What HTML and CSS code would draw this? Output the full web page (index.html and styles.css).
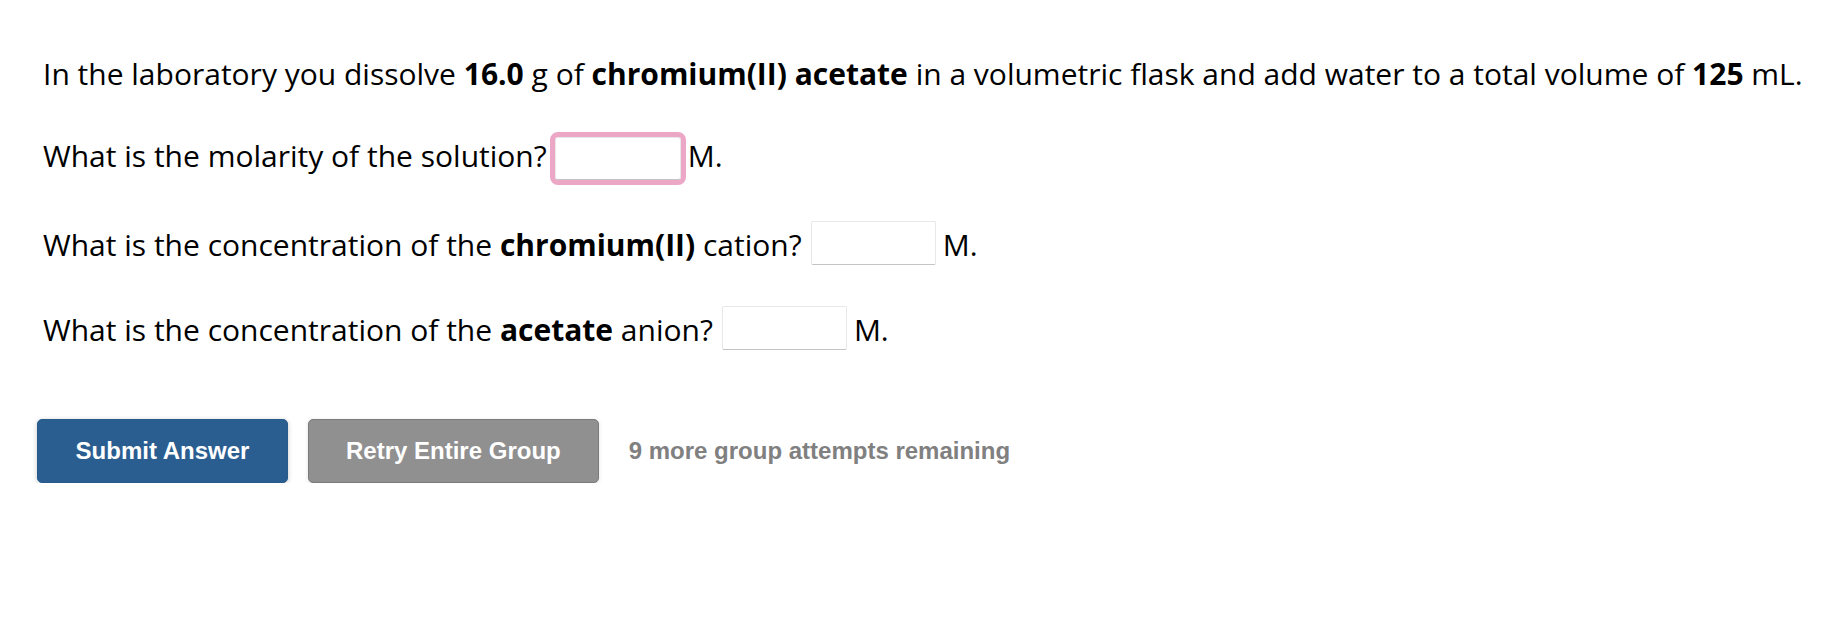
FILE: index.html
```html
<!DOCTYPE html>
<html lang="en">
<head>
<meta charset="utf-8">
<title>Chromium(II) acetate molarity</title>
<link rel="stylesheet" href="styles.css">
</head>
<body>
<div class="question">
  <p class="intro">In the laboratory you dissolve <b>16.0</b> g of <b>chromium(II) acetate</b> in a volumetric flask and add water to a total volume of <b>125</b> mL.</p>
  <p class="q q-first">What is the molarity of the solution?<input class="answer answer-focus" type="text" aria-label="molarity">M.</p>
  <p class="q q-mid">What is the concentration of the <b>chromium(II)</b> cation?<input class="answer answer-plain" type="text" aria-label="cation concentration">M.</p>
  <p class="q q-last">What is the concentration of the <b>acetate</b> anion?<input class="answer answer-plain" type="text" aria-label="anion concentration">M.</p>
  <div class="actions">
    <button class="btn btn-submit" type="button">Submit Answer</button>
    <button class="btn btn-retry" type="button">Retry Entire Group</button>
    <span class="attempts">9 more group attempts remaining</span>
  </div>
</div>
</body>
</html>
```

FILE: styles.css
```css
html, body {
  margin: 0;
  padding: 0;
  background: #ffffff;
}

.question {
  padding: 53px 0 0 43px;
  font-family: "Open Sans", "Liberation Sans", sans-serif;
  font-size: 30px;
  color: #000000;
}

.question p {
  margin: 0;
  line-height: 42px;
  white-space: nowrap;
}

.question b {
  font-weight: 700;
}

.question .q-first {
  margin-top: 40px;
}

.question .q-mid {
  margin-top: 41px;
}

.question .q-last {
  margin-top: 40px;
}

.answer {
  box-sizing: border-box;
  width: 125px;
  height: 44px;
  padding: 0 6px;
  border: 1px solid #e8e8e8;
  border-bottom-color: #c4c4c4;
  border-radius: 2px;
  background: #ffffff;
  font-family: "Open Sans", sans-serif;
  font-size: 24px;
}

.answer-focus {
  width: 126px;
  height: 43px;
  margin: 0 7px 0 8px;
  vertical-align: middle;
  outline: 5px solid #eca6c6;
  border-radius: 3px;
}

.answer-plain {
  margin: 0 7px 0 9px;
  vertical-align: text-bottom;
}

.actions {
  display: flex;
  align-items: center;
  gap: 20px;
  margin-top: 68px;
  margin-left: -6px;
}

.btn {
  box-sizing: border-box;
  height: 64px;
  padding: 0 37px;
  border-radius: 5px;
  font-family: "Liberation Sans", Arial, sans-serif;
  font-weight: 700;
  font-size: 24px;
  color: #ffffff;
  white-space: nowrap;
  cursor: pointer;
}

.btn-submit {
  min-width: 251px;
  background: #2a5e91;
  border: 1px solid #285a8a;
  box-shadow: 0 1px 5px rgba(0, 0, 0, 0.22);
}

.btn-retry {
  min-width: 289px;
  background: #909090;
  border: 1px solid #7b7b7b;
  box-shadow: 0 1px 4px rgba(0, 0, 0, 0.12);
}

.attempts {
  margin-left: 10px;
  font-family: "Liberation Sans", Arial, sans-serif;
  font-weight: 700;
  font-size: 24px;
  color: #808080;
}
```
